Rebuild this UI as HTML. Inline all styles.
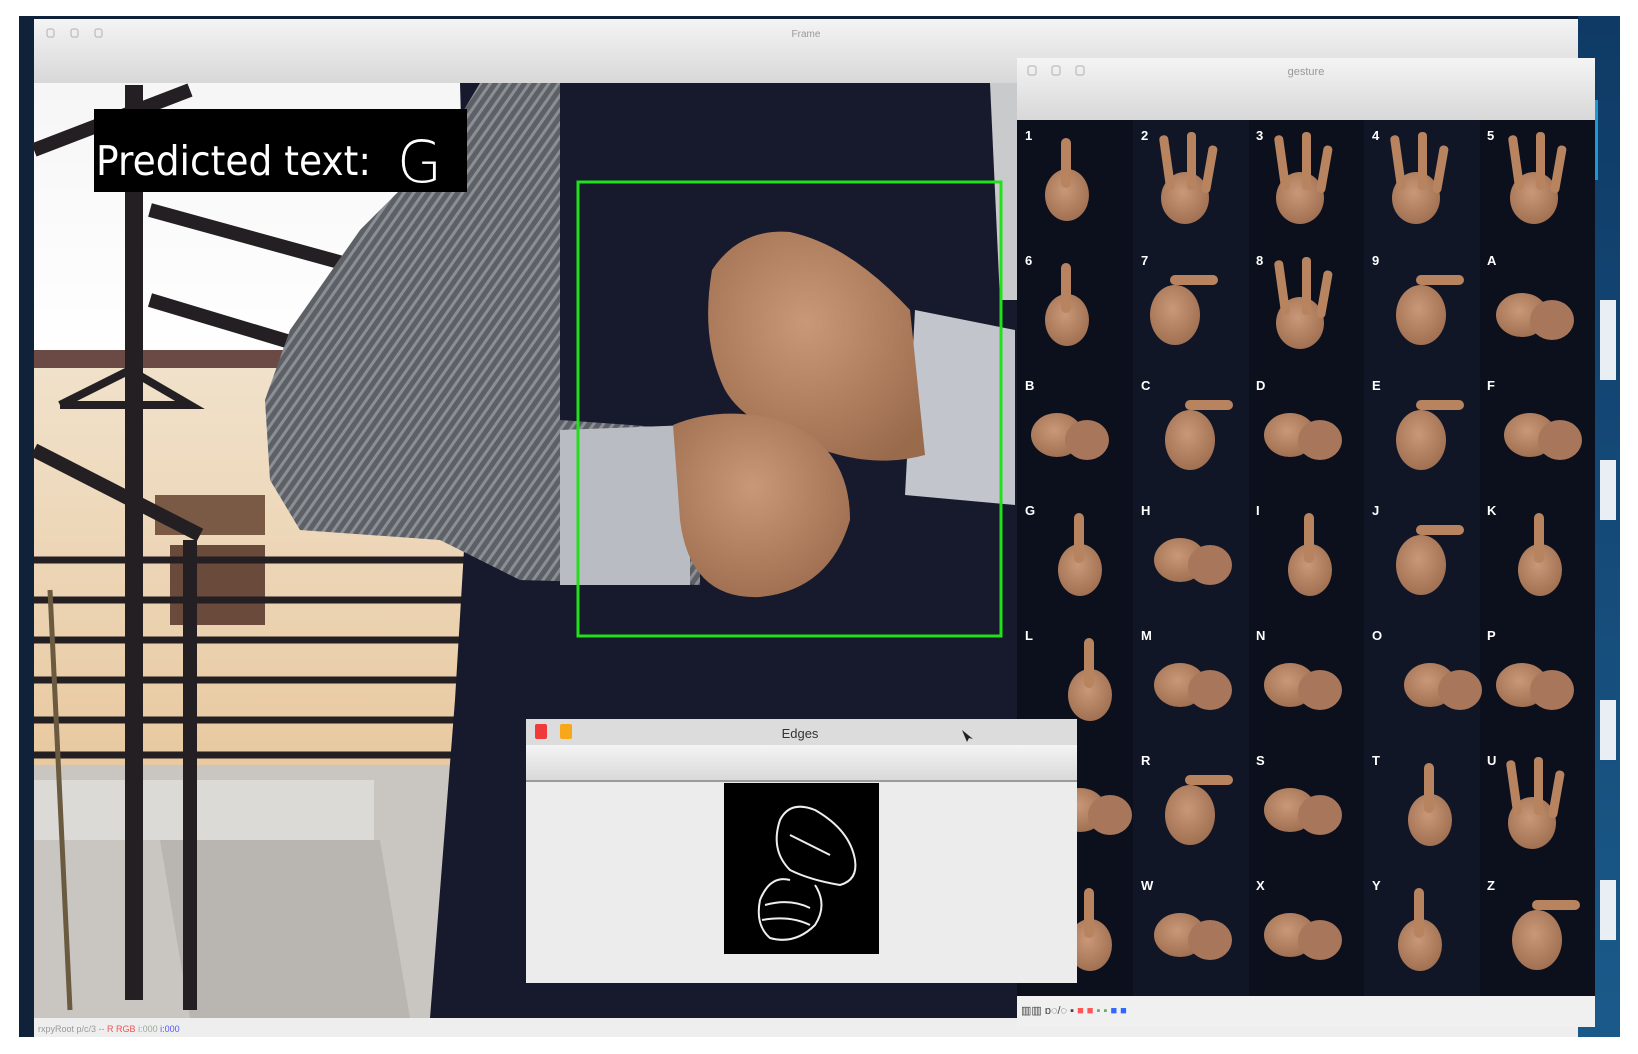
<!DOCTYPE html>
<html><head><meta charset="utf-8">
<style>
html,body{margin:0;padding:0;background:#fff;width:1638px;height:1054px;overflow:hidden;font-family:"Liberation Sans",sans-serif}
svg{position:absolute;left:0;top:0}
</style></head><body>
<svg width="1638" height="1054" viewBox="0 0 1638 1054" xmlns="http://www.w3.org/2000/svg">
<defs>
<linearGradient id="tb" x1="0" y1="0" x2="0" y2="1"><stop offset="0" stop-color="#f4f4f4"/><stop offset="1" stop-color="#d8d8d8"/></linearGradient>
<linearGradient id="sky" x1="0" y1="0" x2="0" y2="1"><stop offset="0" stop-color="#f6f6f6"/><stop offset="1" stop-color="#ffffff"/></linearGradient>
<linearGradient id="bld" x1="0" y1="0" x2="0" y2="1"><stop offset="0" stop-color="#f1e2cc"/><stop offset="1" stop-color="#e8c9a0"/></linearGradient>
<linearGradient id="side" x1="0" y1="0" x2="0" y2="1"><stop offset="0" stop-color="#0f3a66"/><stop offset="1" stop-color="#1a5a8a"/></linearGradient>
<radialGradient id="skin" cx="0.45" cy="0.4" r="0.7"><stop offset="0" stop-color="#c99878"/><stop offset="1" stop-color="#9a6a4c"/></radialGradient>
<pattern id="knit" width="8" height="8" patternUnits="userSpaceOnUse" patternTransform="rotate(35)"><rect width="8" height="8" fill="#5d6166"/><rect width="3" height="8" fill="#8a8f96"/></pattern>
<g id="h1"><ellipse cx="50" cy="75" rx="22" ry="26" fill="url(#skin)"/><rect x="44" y="18" width="10" height="50" rx="5" fill="#b88460"/></g>
<g id="h2"><ellipse cx="50" cy="78" rx="24" ry="26" fill="url(#skin)"/><rect x="30" y="15" width="9" height="55" rx="4" fill="#b88460" transform="rotate(-8 34 60)"/><rect x="52" y="12" width="9" height="58" rx="4" fill="#b88460"/><rect x="68" y="25" width="9" height="48" rx="4" fill="#b88460" transform="rotate(10 72 60)"/></g>
<g id="h3"><ellipse cx="40" cy="65" rx="26" ry="22" fill="url(#skin)"/><ellipse cx="70" cy="70" rx="22" ry="20" fill="#a8765a"/></g>
<g id="h4"><ellipse cx="55" cy="70" rx="25" ry="30" fill="url(#skin)"/><rect x="50" y="30" width="48" height="10" rx="5" fill="#b88460"/></g>
</defs>

<rect x="19" y="16" width="1601" height="1021" fill="#10223a"/>
<rect x="1578" y="16" width="42" height="1021" fill="url(#side)"/>
<rect x="1578" y="100" width="20" height="80" fill="#1a9ad0"/>
<rect x="1600" y="300" width="16" height="80" fill="#e8eef3"/>
<rect x="1600" y="460" width="16" height="60" fill="#e8eef3"/>
<rect x="1600" y="700" width="16" height="60" fill="#e8eef3"/>
<rect x="1600" y="880" width="16" height="60" fill="#e8eef3"/>

<rect x="34" y="19" width="1544" height="64" fill="url(#tb)"/>
<g fill="none" stroke="#bbb" stroke-width="1.2"><rect x="47" y="29" width="7" height="8" rx="2"/><rect x="71" y="29" width="7" height="8" rx="2"/><rect x="95" y="29" width="7" height="8" rx="2"/></g>
<text x="806" y="37" font-size="10" fill="#999" text-anchor="middle">Frame</text>

<rect x="34" y="83" width="985" height="935" fill="#14182a"/>
<rect x="34" y="83" width="450" height="275" fill="url(#sky)"/>
<rect x="34" y="355" width="450" height="410" fill="url(#bld)"/>
<rect x="34" y="350" width="450" height="18" fill="#6b4a46"/>
<rect x="155" y="495" width="110" height="40" fill="#7a5a44"/>
<rect x="170" y="545" width="95" height="80" fill="#6a4a3a"/>
<rect x="34" y="765" width="450" height="253" fill="#c9c6c2"/>
<rect x="34" y="780" width="340" height="60" fill="#dcdad6"/>
<polygon points="160,840 380,840 410,1018 190,1018" fill="#b9b6b1"/>
<g stroke="#231f22" fill="none">
<line x1="134" y1="85" x2="134" y2="1000" stroke-width="18"/>
<line x1="190" y1="540" x2="190" y2="1010" stroke-width="14"/>
<line x1="34" y1="450" x2="200" y2="535" stroke-width="14"/>
<line x1="34" y1="150" x2="190" y2="90" stroke-width="14"/>
<line x1="150" y1="210" x2="350" y2="265" stroke-width="14"/>
<line x1="150" y1="300" x2="300" y2="345" stroke-width="14"/>
<polyline points="60,405 130,370 190,405 60,405" stroke-width="8"/>
<g stroke-width="7"><line x1="34" y1="560" x2="484" y2="560"/><line x1="34" y1="600" x2="484" y2="600"/><line x1="34" y1="640" x2="484" y2="640"/><line x1="34" y1="680" x2="484" y2="680"/><line x1="34" y1="720" x2="484" y2="720"/><line x1="34" y1="755" x2="484" y2="755"/></g>
<line x1="50" y1="590" x2="70" y2="1010" stroke-width="5" stroke="#6a5a40"/>
</g>
<path d="M460,83 L1000,83 L1019,200 L1019,1018 L430,1018 L455,700 L470,450 Z" fill="#161a2c"/>
<path d="M480,83 L560,83 L560,420 L700,430 L700,585 L520,580 L440,540 L300,530 L270,480 L265,400 L290,330 L360,230 L440,150 Z" fill="url(#knit)"/>
<path d="M560,430 L690,425 L690,585 L560,585 Z" fill="#b9bcc2"/>
<path d="M915,310 L1015,330 L1015,505 L905,495 Z" fill="#c2c5cb"/>
<path d="M990,83 L1019,83 L1019,300 L1000,300 Z" fill="#c8cacc"/>
<path d="M712,270 Q740,228 790,232 Q850,245 910,310 L925,455 Q870,470 810,445 Q745,425 725,390 Q700,340 712,270 Z" fill="url(#skin)"/>
<path d="M673,425 Q720,405 780,420 Q850,445 850,520 Q830,590 760,597 Q690,600 680,520 Z" fill="url(#skin)"/>
<rect x="578" y="182" width="423" height="454" fill="none" stroke="#22e11c" stroke-width="3"/>

<rect x="94" y="109" width="373" height="83" fill="#000"/>
<text x="96" y="175" font-size="41" fill="#fff" font-family="DejaVu Sans, sans-serif" textLength="275" lengthAdjust="spacingAndGlyphs">Predicted text:</text>
<text x="397" y="182" font-size="58" fill="#fff" font-family="DejaVu Sans, sans-serif" font-weight="200">G</text>

<rect x="34" y="1018" width="1544" height="19" fill="#eeeeee"/>
<text x="38" y="1032" font-size="9" fill="#999">rxpyRoot  p/c/3 --  <tspan fill="#e55">R RGB</tspan> <tspan fill="#9a9">i:000</tspan> <tspan fill="#55f">i:000</tspan></text>

<rect x="1017" y="58" width="578" height="62" fill="url(#tb)"/>
<g fill="none" stroke="#bbb" stroke-width="1.2"><rect x="1028" y="66" width="8" height="9" rx="2"/><rect x="1052" y="66" width="8" height="9" rx="2"/><rect x="1076" y="66" width="8" height="9" rx="2"/></g>
<text x="1306" y="75" font-size="11" fill="#999" text-anchor="middle">gesture</text>
<rect x="1017" y="120" width="578" height="876" fill="#0c0f1c"/>
<g fill="#111627">
<rect x="1133" y="120" width="116" height="876"/><rect x="1364" y="120" width="116" height="876"/>
</g>
<g font-size="13" fill="#fff" font-weight="bold">
<text x="1025" y="140">1</text><text x="1141" y="140">2</text><text x="1256" y="140">3</text><text x="1372" y="140">4</text><text x="1487" y="140">5</text>
<text x="1025" y="265">6</text><text x="1141" y="265">7</text><text x="1256" y="265">8</text><text x="1372" y="265">9</text><text x="1487" y="265">A</text>
<text x="1025" y="390">B</text><text x="1141" y="390">C</text><text x="1256" y="390">D</text><text x="1372" y="390">E</text><text x="1487" y="390">F</text>
<text x="1025" y="515">G</text><text x="1141" y="515">H</text><text x="1256" y="515">I</text><text x="1372" y="515">J</text><text x="1487" y="515">K</text>
<text x="1025" y="640">L</text><text x="1141" y="640">M</text><text x="1256" y="640">N</text><text x="1372" y="640">O</text><text x="1487" y="640">P</text>
<text x="1025" y="765">Q</text><text x="1141" y="765">R</text><text x="1256" y="765">S</text><text x="1372" y="765">T</text><text x="1487" y="765">U</text>
<text x="1025" y="890">V</text><text x="1141" y="890">W</text><text x="1256" y="890">X</text><text x="1372" y="890">Y</text><text x="1487" y="890">Z</text>
</g>
<use href="#h1" x="1017" y="120"/><use href="#h2" x="1135" y="120"/><use href="#h2" x="1250" y="120"/><use href="#h2" x="1366" y="120"/><use href="#h2" x="1484" y="120"/>
<use href="#h1" x="1017" y="245"/><use href="#h4" x="1120" y="245"/><use href="#h2" x="1250" y="245"/><use href="#h4" x="1366" y="245"/><use href="#h3" x="1482" y="250"/>
<use href="#h3" x="1017" y="370"/><use href="#h4" x="1135" y="370"/><use href="#h3" x="1250" y="370"/><use href="#h4" x="1366" y="370"/><use href="#h3" x="1490" y="370"/>
<use href="#h1" x="1030" y="495"/><use href="#h3" x="1140" y="495"/><use href="#h1" x="1260" y="495"/><use href="#h4" x="1366" y="495"/><use href="#h1" x="1490" y="495"/>
<use href="#h1" x="1040" y="620"/><use href="#h3" x="1140" y="620"/><use href="#h3" x="1250" y="620"/><use href="#h3" x="1390" y="620"/><use href="#h3" x="1482" y="620"/>
<use href="#h3" x="1040" y="745"/><use href="#h4" x="1135" y="745"/><use href="#h3" x="1250" y="745"/><use href="#h1" x="1380" y="745"/><use href="#h2" x="1482" y="745"/>
<use href="#h1" x="1040" y="870"/><use href="#h3" x="1140" y="870"/><use href="#h3" x="1250" y="870"/><use href="#h1" x="1370" y="870"/><use href="#h4" x="1482" y="870"/>
<rect x="1017" y="996" width="578" height="31" fill="#f0f0f0"/>
<text x="1021" y="1014" font-size="11" fill="#444">▥▥ ɒ◌/◌ ▪ <tspan fill="#f55">■ ■</tspan> <tspan fill="#6a6">▪ ▪</tspan> <tspan fill="#36f">■ ■</tspan></text>

<rect x="526" y="719" width="551" height="264" fill="#ececec"/>
<rect x="526" y="719" width="551" height="26" fill="#dcdcdc"/>
<rect x="526" y="745" width="551" height="36" fill="url(#tb)"/>
<rect x="526" y="780" width="551" height="2" fill="#9a9a9a"/>
<rect x="535" y="724" width="12" height="15" rx="2" fill="#f03a3a"/>
<rect x="560" y="724" width="12" height="15" rx="2" fill="#f7a81a"/>
<text x="800" y="738" font-size="13" fill="#333" text-anchor="middle">Edges</text>
<path d="M962,730 l5,12 l2,-4 l4,1 Z" fill="#222"/>
<rect x="724" y="783" width="155" height="171" fill="#000"/>
<g fill="none" stroke="#eee" stroke-width="2">
<path d="M780,820 Q790,800 815,810 Q850,830 855,860 Q858,880 840,885 Q810,880 790,870 Q770,850 780,820 Z"/>
<path d="M790,880 Q770,875 760,900 Q755,925 770,938 Q795,945 815,925 Q828,905 815,885"/>
<path d="M765,905 Q790,898 810,908 M762,920 Q790,915 810,925 M790,835 Q810,845 830,855"/>
</g>
</svg>
</body></html>
